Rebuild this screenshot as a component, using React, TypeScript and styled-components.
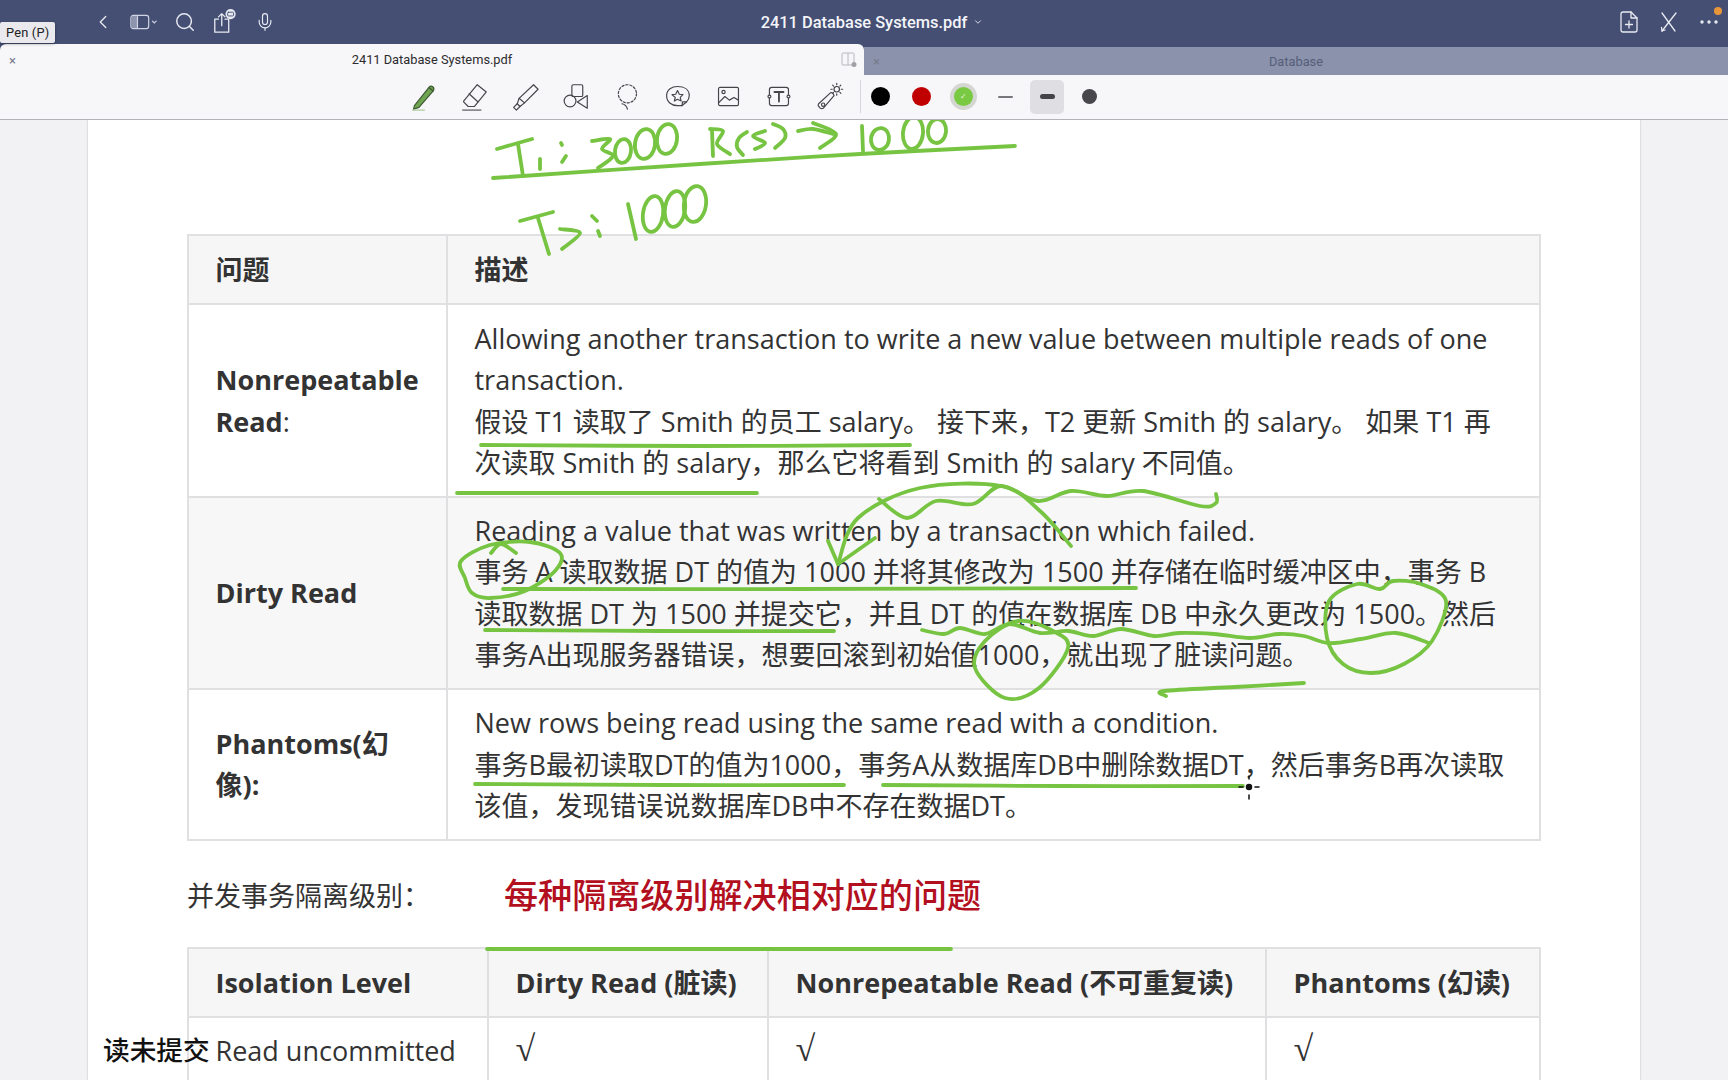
import React from "react";
import styled, { createGlobalStyle } from "styled-components";
import { ChevronLeft, ChevronDown, Search, Mic } from "lucide-react";

const GlobalStyle = createGlobalStyle`
  html, body {
    margin: 0;
    padding: 0;
    background: #f2f2f4;
    overflow: hidden;
  }
`;

const UI_FONT = `Roboto, "Noto Sans", sans-serif`;
const DOC_FONT = `"Open Sans", "Noto Sans CJK SC", sans-serif`;
const INK = "#77c443";

const Root = styled.div`
  position: relative;
  width: 1728px;
  height: 1080px;
  display: flex;
  flex-direction: column;
  overflow: hidden;
  font-family: ${UI_FONT};
`;

const TopBar = styled.header`
  height: 44px;
  flex: none;
  background: #454f73;
  display: grid;
  grid-template-columns: 1fr auto 1fr;
  align-items: center;
  color: #fff;
`;

const BarGroup = styled.div<{ $end?: boolean }>`
  display: flex;
  align-items: center;
  justify-content: ${({ $end }) => ($end ? "flex-end" : "flex-start")};
  gap: ${({ $end }) => ($end ? "18px" : "16px")};
  padding: ${({ $end }) => ($end ? "0 8px 0 0" : "0 0 0 92px")};
`;

const BarIcon = styled.span<{ $w?: number }>`
  display: flex;
  align-items: center;
  justify-content: center;
  width: ${({ $w }) => $w ?? 22}px;
  height: 26px;
  color: #e8eaf2;
`;

const Title = styled.div`
  display: flex;
  align-items: center;
  gap: 6px;
  padding-left: 16px;
  font-size: 16.4px;
  font-weight: 500;
  color: #f4f5f9;
`;

const Notify = styled.span`
  position: absolute;
  top: 7px;
  right: 6px;
  width: 8px;
  height: 8px;
  border-radius: 50%;
  background: #e8953a;
`;

const Tooltip = styled.div`
  position: absolute;
  left: 0;
  top: 22px;
  padding: 0 6px;
  height: 21px;
  line-height: 21px;
  background: #e9e9ee;
  border-radius: 2px;
  box-shadow: 0 1px 3px rgba(0, 0, 0, 0.35);
  font-size: 12.8px;
  letter-spacing: 0.2px;
  color: #222;
  z-index: 3;
`;

const TabBar = styled.div`
  height: 31px;
  flex: none;
  display: flex;
  align-items: flex-end;
  background: #454f73;
`;

const Tab = styled.div<{ $active?: boolean }>`
  position: relative;
  width: 864px;
  height: ${({ $active }) => ($active ? "31px" : "28px")};
  display: flex;
  align-items: center;
  justify-content: center;
  font-size: 12.8px;
  background: ${({ $active }) => ($active ? "#f7f6f9" : "#8a92ac")};
  color: ${({ $active }) => ($active ? "#2c2c2e" : "#565e78")};
  border-radius: ${({ $active }) => ($active ? "6px 6px 0 0" : "0")};
`;

const TabClose = styled.span`
  position: absolute;
  left: 9px;
  top: 50%;
  transform: translateY(-50%);
  font-size: 13px;
  color: #777c8c;
`;

const TabSplit = styled.span`
  position: absolute;
  right: 7px;
  top: 8px;
  display: flex;
`;

const Toolbar = styled.div`
  height: 43.5px;
  flex: none;
  display: flex;
  align-items: center;
  padding-left: 398px;
  background: #f7f6f9;
  border-bottom: 1.5px solid #b4b4b8;
`;

const ToolCell = styled.span`
  width: 50.8px;
  height: 30px;
  display: flex;
  align-items: center;
  justify-content: center;
`;

const Divider = styled.span`
  width: 1px;
  height: 33px;
  margin: 0 2px 0 5px;
  background: #d6d6da;
`;

const SwatchCell = styled.span<{ $selected?: boolean }>`
  width: 34px;
  height: 34px;
  margin-right: 7.800px;
  display: flex;
  align-items: center;
  justify-content: center;
  border-radius: 5px;
  background: ${({ $selected }) => ($selected ? "#dfdfe3" : "transparent")};
`;

const ColorDot = styled.span<{ $color: string; $ring?: boolean }>`
  width: 19px;
  height: 19px;
  border-radius: 50%;
  background: ${({ $color }) => $color};
  box-shadow: ${({ $ring }) => ($ring ? "0 0 0 4px #d4d6d2" : "none")};
  display: flex;
  align-items: center;
  justify-content: center;
  color: #e8f5dd;
  font-size: 8px;
`;

const WidthMark = styled.span<{ $w: number; $h: number; $color: string }>`
  width: ${({ $w }) => $w}px;
  height: ${({ $h }) => $h}px;
  border-radius: ${({ $h }) => $h}px;
  background: ${({ $color }) => $color};
`;

const Viewer = styled.main`
  position: relative;
  flex: 1;
  min-height: 0;
  overflow: hidden;
  background: #f2f2f4;
`;

const Page = styled.article`
  width: 1552px;
  height: 100%;
  margin-left: 88px;
  box-sizing: border-box;
  padding: 114.500px 99px 0;
  background: #fff;
  box-shadow: 0 0 2px rgba(0, 0, 0, 0.25);
  font-family: ${DOC_FONT};
  font-size: 27px;
  line-height: 41.4px;
  color: #333;
`;

const Table = styled.table`
  width: 1354px;
  table-layout: fixed;
  border-collapse: collapse;
  white-space: nowrap;
`;

const Th = styled.th`
  padding: 13px 26.500px;
  border: 2px solid #e0e0e3;
  background: #f6f6f7;
  text-align: left;
  font-weight: 700;
`;

const Td = styled.td<{ $shade?: boolean }>`
  padding: 12.300px 26.500px;
  border: 2px solid #e0e0e3;
  background: ${({ $shade }) => ($shade ? "#f7f7f8" : "#fff")};
`;

const Heading = styled.div`
  display: flex;
  align-items: center;
  box-sizing: border-box;
  gap: 74px;
  height: 106px;
  padding-top: 4px;
`;

const RedNote = styled.span`
  font-size: 34.100px;
  font-weight: 500;
  color: #b3101f;
`;

const Tick = styled.span`
  font-family: "Liberation Serif", serif;
  font-size: 36px;
  line-height: 30px;
`;

const Caption = styled.div`
  position: absolute;
  left: 103px;
  top: 1030px;
  font-family: "Noto Sans CJK SC", sans-serif;
  font-size: 26.700px;
  font-weight: 500;
  line-height: 38px;
  color: #111;
  z-index: 2;
`;

const InkLayer = styled.svg`
  position: absolute;
  left: 0;
  top: 0;
  width: 1728px;
  height: 961px;
  pointer-events: none;
  fill: none;
  stroke: ${INK};
  stroke-width: 3.800;
  stroke-linecap: round;
  stroke-linejoin: round;
`;

type Pt = [number, number];

// catmull-rom through the sampled pen points
const smooth = (pts: Pt[], closed = false) => {
  const p = closed ? [pts[pts.length - 1], ...pts, pts[0], pts[1]] : [pts[0], ...pts, pts[pts.length - 1]];
  let d = `M${p[1][0]} ${p[1][1]}`;
  for (let i = 1; i < p.length - 2; i++) {
    const c1x = p[i][0] + (p[i + 1][0] - p[i - 1][0]) / 6;
    const c1y = p[i][1] + (p[i + 1][1] - p[i - 1][1]) / 6;
    const c2x = p[i + 1][0] - (p[i + 2][0] - p[i][0]) / 6;
    const c2y = p[i + 1][1] - (p[i + 2][1] - p[i][1]) / 6;
    d += `C${c1x.toFixed(1)} ${c1y.toFixed(1)} ${c2x.toFixed(1)} ${c2y.toFixed(1)} ${p[i + 1][0]} ${p[i + 1][1]}`;
  }
  return d;
};

const strokes: Pt[][] = [
  // T1 : 3000 R(S) -> 1000
  [[493, 177], [700, 163], [860, 153], [1015, 145]],
  [[497, 148], [532, 138]],
  [[518, 143], [523, 175]],
  [[540, 158], [540, 168]],
  [[561, 142], [562, 144]],
  [[566, 155], [562, 161]],
  [[592, 140], [610, 138], [602, 148], [613, 155], [598, 167]],
  [[712, 130], [713, 155]],
  [[710, 128], [723, 130], [717, 143], [730, 153]],
  [[747, 131], [739, 137], [737, 146], [743, 154]],
  [[765, 130], [753, 135], [765, 142], [755, 148]],
  [[773, 123], [783, 128], [785, 137], [775, 147]],
  [[798, 130], [813, 128], [833, 133]],
  [[813, 122], [836, 133], [820, 147]],
  [[862, 125], [863, 150]],
  // T2 : 1000
  [[520, 220], [553, 211]],
  [[538, 217], [549, 253]],
  [[560, 228], [580, 232], [562, 248]],
  [[592, 215], [597, 220]],
  [[598, 230], [600, 235]],
  [[628, 203], [636, 238]],
  // underlines, first table
  [[481, 444], [700, 445], [910, 444]],
  [[457, 492], [600, 492], [757, 492]],
  // arrow over the dirty read row
  [[838, 563], [858, 517], [920, 487], [1001, 485], [1040, 510], [1071, 545]],
  [[828, 540], [838, 563]],
  [[838, 563], [875, 537]],
  [[879, 498], [907, 517], [936, 500], [973, 503], [1001, 485], [1038, 500], [1071, 490], [1107, 495], [1143, 490], [1200, 505], [1216, 502], [1216, 493]],
  // mark over 事务 A
  [[491, 552], [501, 543], [516, 552]],
  [[503, 588], [800, 588], [1136, 587]],
  [[485, 629], [660, 630], [834, 630]],
  // wave under the DB line
  [[922, 629], [944, 633], [960, 627], [985, 633], [1010, 623], [1040, 632], [1068, 630], [1093, 635], [1121, 628], [1154, 635], [1179, 632], [1214, 633], [1250, 637], [1279, 633], [1304, 635], [1329, 642], [1361, 638], [1396, 632], [1429, 642]],
  [[1166, 695], [1164, 690], [1235, 686], [1304, 682]],
  // phantom row and second table
  [[475, 783], [660, 784], [844, 784]],
  [[883, 784], [1060, 785], [1243, 785]],
  [[487, 948], [951, 948]],
];

const loops: Pt[][] = [
  [[465, 577], [461, 560], [490, 544], [530, 541], [560, 552], [555, 570], [525, 590], [490, 597], [472, 592]],
  [[1380, 588], [1357, 583], [1329, 600], [1327, 637], [1343, 663], [1371, 672], [1404, 663], [1432, 640], [1446, 600], [1421, 583], [1393, 580]],
  [[1018, 620], [985, 640], [975, 667], [1005, 697], [1039, 687], [1068, 647], [1053, 630]],
];

const zeros: [number, number, number, number, number][] = [
  [623, 150, 8, 12, 8],
  [645, 143, 10, 15, 8],
  [667, 138, 10, 15, 8],
  [880, 138, 9, 11, 10],
  [913, 132, 10, 16, 6],
  [937, 130, 9, 12, 6],
  [653, 213, 10, 18, 8],
  [675, 208, 10, 18, 8],
  [695, 203, 11, 18, 8],
];

const Ink = () => (
  <InkLayer viewBox="0 119 1728 961">
    {zeros.map(([cx, cy, rx, ry, r], i) => (
      <ellipse key={i} cx={cx} cy={cy} rx={rx} ry={ry} transform={`rotate(${r} ${cx} ${cy})`} />
    ))}
    {strokes.map((s, i) => (
      <path key={i} d={smooth(s)} />
    ))}
    {loops.map((s, i) => (
      <path key={i} d={smooth(s, true)} />
    ))}
    {/* cursor */}
    <g stroke="#111" strokeWidth="1.500">
      <circle cx="1249" cy="786" r="2.500" fill="#111" />
      <path d="M1249 775v3M1249 794v4M1239 786h4M1255 786h4" />
    </g>
  </InkLayer>
);

const Svg = ({ children }: { children: React.ReactNode }) => (
  <svg width={29} height={29} viewBox="0 0 32 32" fill="none" stroke="#45454a" strokeWidth="1.300" strokeLinecap="round" strokeLinejoin="round">
    {children}
  </svg>
);

const tools = [
  <Svg key="pen">
    <path d="M6 26 L22 6 Q24 3.500 26.500 5.500 Q28.500 7.500 26.500 10 L11 28 L5 30 Z" fill="#6fa450" stroke="#3d5a33" />
    <path d="M22 6 L26.500 10" stroke="#3d5a33" />
    <path d="M4 31 H17" stroke="#aecba0" strokeWidth="1.500" />
  </Svg>,
  <Svg key="eraser">
    <path d="M19 3 L29 11 L16 27 H9 L4 22 L4 21 Z" />
    <path d="M10 13 L20 22" />
    <path d="M3 31 H23" stroke="#8a8a8e" strokeWidth="1.800" />
  </Svg>,
  <Svg key="marker">
    <path d="M26 3 L31 8 L16 23 L10 18 Z" />
    <path d="M10 18 L8 24 L11 27 L16 23" />
    <path d="M8 24 L4 28 L7 31 L11 27" />
  </Svg>,
  <Svg key="shapes">
    <rect x="12" y="3" width="12" height="13" rx="1.500" />
    <circle cx="10" cy="21" r="6.500" />
    <path d="M29 15 V29 L18 22 Z" />
  </Svg>,
  <Svg key="lasso">
    <circle cx="17" cy="13" r="10" strokeDasharray="2.500 2" />
    <path d="M11 24 Q16 25 17 30" />
  </Svg>,
  <Svg key="sticker">
    <path d="M4 15 C4 8 10 5 16 5 C23 5 29 8 29 15 C29 18 28 20 26 22 L21 26 C19 26 18 26 16 26 C9 26 4 22 4 15 Z" />
    <path d="M21 26 L21.500 22 L26 22" />
    <path d="M16 9.500 L18 13.500 L22 14 L19 17 L20 21 L16 19 L12.500 21 L13.500 17 L10 14 L14 13.500 Z" />
  </Svg>,
  <Svg key="image">
    <rect x="5" y="6" width="22" height="20" rx="1.500" />
    <circle cx="10.500" cy="11" r="1.800" />
    <path d="M5 23 L12 16 L17 20 L22 17 L27 20" />
  </Svg>,
  <Svg key="text">
    <rect x="6" y="6" width="21" height="20" rx="2.500" />
    <circle cx="6" cy="16" r="1.600" fill="#f7f6f9" />
    <circle cx="27" cy="16" r="1.600" fill="#f7f6f9" />
    <path d="M11.500 11 H21.500 M16.500 11 V21.500" strokeWidth="2" />
  </Svg>,
  <Svg key="laser">
    <path d="M4 24 L17 12 Q19 11 20 13 L21 15 L9 29 Q7 30 5.500 28.500 L3.500 26 Q3.500 25 4 24 Z" />
    <circle cx="9" cy="25" r="1.800" />
    <circle cx="24" cy="8" r="3" />
    <path d="M24 1.500V3M24 13v1.500M17.500 8H19M29 8h1.500M19.500 3.500l1 1M27.500 11.500l1 1M19.500 12.500l1-1M27.500 4.500l1-1" />
  </Svg>,
];

const SidebarIcon = () => (
  <svg width="30" height="18" viewBox="0 0 30 18" fill="none" stroke="#cfd3e2" strokeWidth="1.300" strokeLinecap="round">
    <rect x="1" y="2" width="19" height="14" rx="2.500" />
    <rect x="1.500" y="2.500" width="6.500" height="13" rx="2" fill="#8d94ae" stroke="none" />
    <path d="M8 2 V16" />
    <path d="M24 8 l2 2 l2 -2" />
  </svg>
);

const ShareIcon = () => (
  <svg width="28" height="28" viewBox="0 0 28 28" fill="none" stroke="#e8eaf2" strokeWidth="1.400" strokeLinecap="round" strokeLinejoin="round">
    <path d="M7 11 H3 V25 H18 V11 H14" />
    <path d="M10.500 18 V5 M7 8.500 L10.500 5 L14 8.500" />
    <circle cx="20" cy="5.500" r="5.500" fill="#e8eaf2" stroke="none" />
    <rect x="16.800" y="3.500" width="6.400" height="4" rx="1" stroke="#454f73" strokeWidth="1" />
  </svg>
);

const FilePlusIcon = () => (
  <svg width="20" height="24" viewBox="0 0 20 24" fill="none" stroke="#e8eaf2" strokeWidth="1.300" strokeLinecap="round" strokeLinejoin="round">
    <path d="M2 4 Q2 2 4 2 H12 L18 8 V20 Q18 22 16 22 H4 Q2 22 2 20 Z" />
    <path d="M12 2 V8 H18 M10 11 V18 M6.500 14.500 H13.500" />
  </svg>
);

const PencilXIcon = () => (
  <svg width="20" height="22" viewBox="0 0 20 22" fill="none" stroke="#e8eaf2" strokeWidth="1.300" strokeLinecap="round" strokeLinejoin="round">
    <path d="M3 2 L16 20 M17 2 L3 20" />
    <path d="M3 20 L2.500 16.500 M3 20 L6 19" />
  </svg>
);

const SplitIcon = () => (
  <svg width="16" height="16" viewBox="0 0 16 16" fill="none" stroke="#b8b8be" strokeWidth="1">
    <rect x="1" y="1" width="12" height="12" rx="1" />
    <path d="M7 1 V13" />
    <circle cx="13" cy="12.500" r="2.500" fill="#a0a0a6" stroke="none" />
  </svg>
);

const App: React.FC = () => (
  <Root>
    <GlobalStyle />
    <TopBar>
      <BarGroup>
        <BarIcon><ChevronLeft size={26} strokeWidth={1.4} /></BarIcon>
        <BarIcon $w={28}><SidebarIcon /></BarIcon>
        <BarIcon><Search size={22} strokeWidth={1.6} /></BarIcon>
        <BarIcon $w={26}><ShareIcon /></BarIcon>
        <BarIcon><Mic size={20} strokeWidth={1.4} /></BarIcon>
      </BarGroup>
      <Title>
        2411 Database Systems.pdf
        <ChevronDown size={10} strokeWidth={2} />
      </Title>
      <BarGroup $end>
        <BarIcon><FilePlusIcon /></BarIcon>
        <BarIcon><PencilXIcon /></BarIcon>
        <BarIcon>
          <svg width="20" height="6" viewBox="0 0 20 6" fill="#e8eaf2">
            <circle cx="3" cy="3" r="1.700" />
            <circle cx="10" cy="3" r="1.700" />
            <circle cx="17" cy="3" r="1.700" />
          </svg>
        </BarIcon>
      </BarGroup>
      <Notify />
    </TopBar>
    <Tooltip>Pen (P)</Tooltip>
    <TabBar>
      <Tab $active>
        <TabClose>×</TabClose>
        2411 Database Systems.pdf
        <TabSplit><SplitIcon /></TabSplit>
      </Tab>
      <Tab>
        <TabClose>×</TabClose>
        Database
      </Tab>
    </TabBar>
    <Toolbar>
      {tools.map((t) => (
        <ToolCell key={t.key}>{t}</ToolCell>
      ))}
      <Divider />
      <SwatchCell><ColorDot $color="#000" /></SwatchCell>
      <SwatchCell><ColorDot $color="#c00000" /></SwatchCell>
      <SwatchCell><ColorDot $color="#7ac943" $ring>✓</ColorDot></SwatchCell>
      <SwatchCell><WidthMark $w={15} $h={2} $color="#77777b" /></SwatchCell>
      <SwatchCell $selected><WidthMark $w={15} $h={5} $color="#444448" /></SwatchCell>
      <SwatchCell><WidthMark $w={15} $h={15} $color="#48484c" /></SwatchCell>
    </Toolbar>
    <Viewer>
      <Page>
        <Table>
          <colgroup>
            <col width={259} />
            <col />
          </colgroup>
          <thead>
            <tr>
              <Th>问题</Th>
              <Th>描述</Th>
            </tr>
          </thead>
          <tbody>
            <tr>
              <Td><strong>Nonrepeatable<br />Read</strong>:</Td>
              <Td>
                Allowing another transaction to write a new value between multiple reads of one<br />
                transaction.<br />
                假设 T1 读取了 Smith 的员工 salary。 接下来，T2 更新 Smith 的 salary。 如果 T1 再<br />
                次读取 Smith 的 salary，那么它将看到 Smith 的 salary 不同值。
              </Td>
            </tr>
            <tr>
              <Td $shade><strong>Dirty Read</strong></Td>
              <Td $shade>
                Reading a value that was written by a transaction which failed.<br />
                事务 A 读取数据 DT 的值为 1000 并将其修改为 1500 并存储在临时缓冲区中，事务 B<br />
                读取数据 DT 为 1500 并提交它，并且 DT 的值在数据库 DB 中永久更改为 1500。然后<br />
                事务A出现服务器错误，想要回滚到初始值1000，就出现了脏读问题。
              </Td>
            </tr>
            <tr>
              <Td><strong>Phantoms(幻<br />像):</strong></Td>
              <Td>
                New rows being read using the same read with a condition.<br />
                事务B最初读取DT的值为1000，事务A从数据库DB中删除数据DT，然后事务B再次读取<br />
                该值，发现错误说数据库DB中不存在数据DT。
              </Td>
            </tr>
          </tbody>
        </Table>
        <Heading>
          <span>并发事务隔离级别：</span>
          <RedNote>每种隔离级别解决相对应的问题</RedNote>
        </Heading>
        <Table>
          <colgroup>
            <col width={300} />
            <col width={280} />
            <col width={498} />
            <col />
          </colgroup>
          <thead>
            <tr>
              <Th>Isolation Level</Th>
              <Th>Dirty Read (脏读)</Th>
              <Th>Nonrepeatable Read (不可重复读)</Th>
              <Th>Phantoms (幻读)</Th>
            </tr>
          </thead>
          <tbody>
            <tr>
              <Td>Read uncommitted</Td>
              <Td><Tick>√</Tick></Td>
              <Td><Tick>√</Tick></Td>
              <Td><Tick>√</Tick></Td>
            </tr>
          </tbody>
        </Table>
      </Page>
      <Ink />
    </Viewer>
    <Caption>读未提交</Caption>
  </Root>
);

export default App;
